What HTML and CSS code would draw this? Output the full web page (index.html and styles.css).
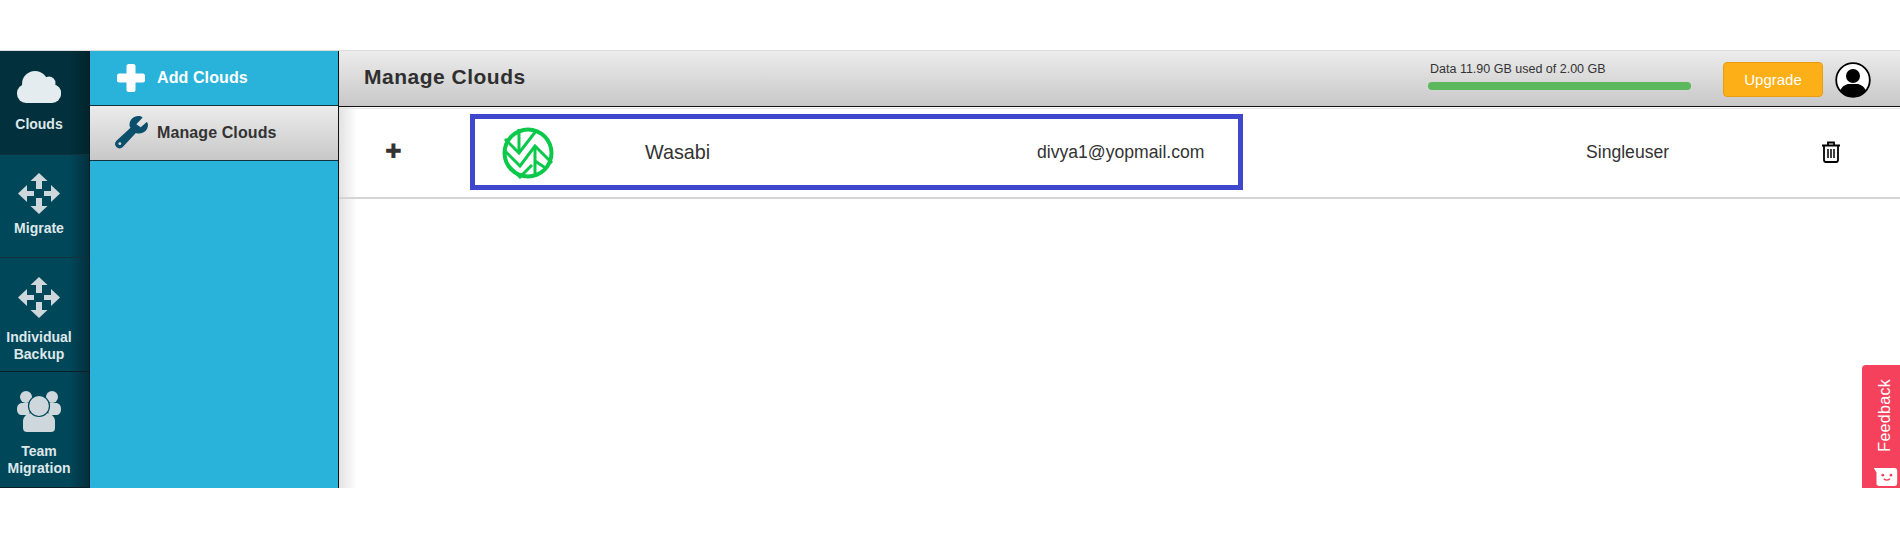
FILE: index.html
```html
<!DOCTYPE html>
<html lang="en">
<head>
    <meta charset="UTF-8">
    <title>Manage Clouds</title>
    <link rel="stylesheet" href="styles.css">
</head>
<body>
    <div class="app">
        <nav class="rail">
            <a class="rail-item active clouds">
                <svg class="rail-icon" width="44" height="32" viewBox="0 0 44 32" fill="#e4ecef">
                    <rect x="0" y="13" width="44" height="19" rx="9"/>
                    <circle cx="18" cy="13" r="13"/>
                    <circle cx="32" cy="12" r="6.500"/>
                    <circle cx="36" cy="22" r="8"/>
                </svg>
                <span>Clouds</span>
            </a>
            <a class="rail-item migrate">
                <svg class="rail-icon" width="42" height="42" viewBox="0 0 42 42"><path d="M21 0L29.500 8H24V16H18V8H12.500ZM21 41L12.500 33H18V25H24V33H29.500ZM0 20.500L9 12V18H16V23H9V29ZM42 20.500L33 29V23H26V18H33V12Z" fill="#ced8dc"/></svg>
                <span>Migrate</span>
            </a>
            <a class="rail-item backup">
                <svg class="rail-icon" width="42" height="42" viewBox="0 0 42 42"><path d="M21 0L29.500 8H24V16H18V8H12.500ZM21 41L12.500 33H18V25H24V33H29.500ZM0 20.500L9 12V18H16V23H9V29ZM42 20.500L33 29V23H26V18H33V12Z" fill="#ced8dc"/></svg>
                <span>Individual<br>Backup</span>
            </a>
            <a class="rail-item team">
                <svg class="rail-icon" width="44" height="42" viewBox="0 0 44 42">
                    <circle cx="9" cy="6" r="6" fill="#ced8dc"/>
                    <circle cx="35" cy="6" r="6" fill="#ced8dc"/>
                    <path d="M4 12H15L12 24H5C2 24 0 22 0 18C0 15 1 13 4 12ZM29 12H40C43 13 44 15 44 18C44 22 42 24 39 24H32Z" fill="#ced8dc"/>
                    <path d="M6 37V30C6 26 10 22 15 22H29C34 22 38 26 38 30V37C38 40 36 41 34 41H10C8 41 6 40 6 37Z" fill="#ced8dc"/>
                    <circle cx="22" cy="15" r="10.500" fill="#ced8dc" stroke="#00475a" stroke-width="1.200"/>
                </svg>
                <span>Team<br>Migration</span>
            </a>
        </nav>

        <aside class="panel">
            <a class="panel-item add">
                <svg width="28" height="28" viewBox="0 0 28 28"><path d="M9.500 2C9.500 1 10.500 0 11.500 0H16.500C17.500 0 18.500 1 18.500 2V9.500H26C27 9.500 28 10.500 28 11.500V16.500C28 17.500 27 18.500 26 18.500H18.500V26C18.500 27 17.500 28 16.500 28H11.500C10.500 28 9.500 27 9.500 26V18.500H2C1 18.500 0 17.500 0 16.500V11.500C0 10.500 1 9.500 2 9.500H9.500Z" fill="#fff"/></svg>
                <span>Add Clouds</span>
            </a>
            <a class="panel-item manage">
                <svg width="33" height="33" viewBox="0 0 34 34"><path d="M24 0C19 0 15 4 15 9C15 10 15 11 16 12L1.500 25.500C-0.500 27.500 -0.500 30 1.500 32C3.500 34 6 34 8 32L21.500 17.500C22.500 18 23.500 18 25 18C30 18 34 14 34 9L33 6L26.500 11.500L22 8.500L28.500 1.500L27 .5C26 0 25 0 24 0Z" fill="#0b4f6c"/><circle cx="5" cy="28.500" r="1.500" fill="#d8d8d8"/></svg>
                <span>Manage Clouds</span>
            </a>
        </aside>

        <main class="main">
            <header class="topbar">
                <h1>Manage Clouds</h1>
                <div class="usage">
                    <p>Data 11.90 GB used of 2.00 GB</p>
                    <div class="usage-bar"></div>
                </div>
                <button class="upgrade">Upgrade</button>
                <svg class="avatar" width="36" height="36" viewBox="0 0 36 36">
                    <circle cx="18" cy="18" r="16.800" fill="#fff" stroke="#000" stroke-width="1.800"/>
                    <circle cx="18" cy="14" r="7" fill="#000"/>
                    <path d="M5 29C7 24 11 22 14 22H22C25 22 29 24 31 29C28 33 23 35 18 35C13 35 8 33 5 29Z" fill="#000"/>
                </svg>
            </header>

            <div class="cloud-row">
                <span class="expand">&#10010;</span>
                <div class="cloud-box">
                    <svg class="logo" width="52" height="52" viewBox="0 0 52 52">
                        <circle cx="26" cy="26" r="25.500" fill="#0ac84a"/>
                        <circle cx="26" cy="26" r="21.500" fill="#fff"/>
                        <g fill="none" stroke="#0ac84a" stroke-width="3">
                            <path d="M3 24L18 39L33 19L50 36"/>
                            <path d="M33 19V50"/>
                            <path d="M33 34L45 42"/>
                            <path d="M6 38L18 50L30 38"/>
                            <path d="M3 12L17 26L34 4"/>
                            <path d="M17 2V26"/>
                        </g>
                    </svg>
                    <span class="cloud-name">Wasabi</span>
                    <span class="cloud-mail">divya1@yopmail.com</span>
                </div>
                <span class="cloud-type">Singleuser</span>
                <svg class="trash" width="20" height="22" viewBox="0 0 20 22" fill="none" stroke="#000" stroke-width="1.800">
                    <path d="M1 4.500H19M7 4V1.500H13V4M3 5V19C3 20 4 21 5 21H15C16 21 17 20 17 19V5"/>
                    <path d="M7 8V17M10 8V17M13 8V17" stroke-width="1.500"/>
                </svg>
            </div>

            <a class="feedback">
                <span>Feedback</span>
                <svg width="25" height="18" viewBox="0 0 26 20">
                    <path d="M0 0H23C25 0 26 1 26 3V17C26 19 25 20 23 20H6C4 20 3 19 3 17V5Z" fill="#fff"/>
                    <circle cx="10" cy="8" r="1.500" fill="#f5415b"/>
                    <circle cx="19" cy="8" r="1.500" fill="#f5415b"/>
                    <path d="M11 12Q14.500 15 18 12" stroke="#f5415b" stroke-width="1.500" fill="none"/>
                </svg>
            </a>
        </main>
    </div>
</body>
</html>
```

FILE: styles.css
```css
html, body {
    margin: 0;
    padding: 0;
}
body {
    font-family: 'Liberation Sans', Arial, sans-serif;
    background-color: #fff;
    color: #333;
    height: 538px;
    overflow: hidden;
    padding-top: 50px;
    box-sizing: border-box;
}
.app {
    display: flex;
    height: 438px;
    border-top: 1px solid #ddd;
    box-sizing: border-box;
}

/* left icon rail */
.rail {
    width: 90px;
    flex-shrink: 0;
    display: flex;
    flex-direction: column;
    background: linear-gradient(to right, #00475a 78%, #04303e);
    border-right: 1px solid #041c24;
    box-sizing: border-box;
}
.rail-item {
    display: flex;
    flex-direction: column;
    align-items: center;
    box-sizing: border-box;
    padding-right: 11px;
    color: #dfe7ea;
    font-size: 14px;
    font-weight: bold;
    line-height: 17px;
    text-align: center;
    white-space: nowrap;
    border-bottom: 1px solid #10323d;
}
.rail-item.active {
    background: linear-gradient(to right, #02303c 78%, #02242e);
}
.clouds {
    height: 104px;
    padding-top: 20px;
}
.clouds .rail-icon {
    margin-bottom: 13px;
}
.migrate {
    height: 103px;
    padding-top: 18px;
}
.migrate .rail-icon {
    margin-bottom: 5px;
}
.backup {
    height: 114px;
    padding-top: 19px;
    border-bottom-color: #0a1f27;
}
.backup .rail-icon {
    margin-bottom: 10px;
}
.team {
    height: 116px;
    padding-top: 19px;
    border-bottom-color: #0a1f27;
}
.team .rail-icon {
    margin-bottom: 10px;
}

/* second column */
.panel {
    width: 249px;
    flex-shrink: 0;
    background-color: #2ab3da;
    border-right: 1px solid #111;
    box-sizing: border-box;
}
.panel-item {
    display: flex;
    align-items: center;
    height: 55px;
    box-sizing: border-box;
    border-bottom: 1px solid #10323d;
    font-size: 16px;
    font-weight: bold;
    letter-spacing: 0.100px;
}
.add {
    color: #fff;
    padding-left: 27px;
    padding-bottom: 1px;
}
.add span {
    margin-left: 12px;
}
.manage {
    color: #333;
    padding-left: 25px;
    padding-bottom: 1px;
    background: linear-gradient(#ececec, #c8c8c8);
}
.manage span {
    margin-left: 9px;
}

/* main area */
.main {
    flex: 1;
    min-width: 0;
    position: relative;
}
.main::before {
    content: "";
    position: absolute;
    left: 0;
    top: 0;
    bottom: 0;
    width: 18px;
    background: linear-gradient(to right, #e2e2e2, rgba(255,255,255,0));
}
.topbar {
    position: relative;
    display: flex;
    align-items: center;
    height: 56px;
    box-sizing: border-box;
    padding-left: 25px;
    background: linear-gradient(#ececec, #c8c8c8);
    border-bottom: 1px solid #111;
}
.topbar h1 {
    margin: 0 0 4px;
    font-size: 21px;
    font-weight: bold;
    letter-spacing: 0.500px;
    color: #2f2f2f;
    flex: 1;
}
.usage {
    width: 263px;
    margin-right: 32px;
    padding-bottom: 5px;
}
.usage p {
    margin: 0 0 6px 2px;
    font-size: 12.500px;
    line-height: 14px;
    color: #333;
}
.usage-bar {
    height: 8px;
    border-radius: 4px;
    background-color: #5cb85c;
}
.upgrade {
    width: 100px;
    height: 35px;
    padding: 0;
    margin-right: 12px;
    margin-top: 2px;
    background-color: #fcaf17;
    color: #fff;
    border: 1px solid #e99d0e;
    border-radius: 4px;
    font-family: inherit;
    font-size: 15px;
}
.avatar {
    margin-right: 29px;
    margin-top: 2px;
}
.cloud-row {
    position: relative;
    display: flex;
    align-items: center;
    height: 91px;
    margin-top: 1px;
    box-sizing: border-box;
    border-top: 1px solid #e4e4e4;
    border-bottom: 2px solid #d4d4d4;
}
.expand {
    width: 131px;
    padding-left: 46px;
    box-sizing: border-box;
    font-size: 20px;
    color: #333;
    margin-top: -4px;
}
.cloud-box {
    display: flex;
    align-items: center;
    width: 773px;
    height: 76px;
    box-sizing: border-box;
    border: 5px solid #3f48cc;
    margin-top: -2px;
    font-size: 17.600px;
    color: #333;
}
.logo {
    margin-left: 27px;
    margin-top: 2px;
}
.cloud-name {
    margin-left: 91px;
    font-size: 19.800px;
    width: 392px;
    flex-shrink: 0;
}
.cloud-name, .cloud-mail {
    white-space: nowrap;
}
.cloud-type {
    margin-left: 343px;
    font-size: 17.600px;
    width: 235px;
    flex-shrink: 0;
    margin-top: -2px;
}
.trash {
    margin-top: -2px;
}
.feedback {
    position: absolute;
    right: 0;
    bottom: 0;
    width: 38px;
    height: 123px;
    background-color: #f5415b;
    border-top-left-radius: 4px;
    color: #fff;
    display: flex;
    flex-direction: column;
    align-items: flex-end;
    font-size: 16px;
}
.feedback span {
    writing-mode: vertical-rl;
    transform: rotate(180deg);
    margin: 14px 6px 16px 0;
    letter-spacing: 0.300px;
}
.feedback svg {
    margin-right: 2px;
}
```
